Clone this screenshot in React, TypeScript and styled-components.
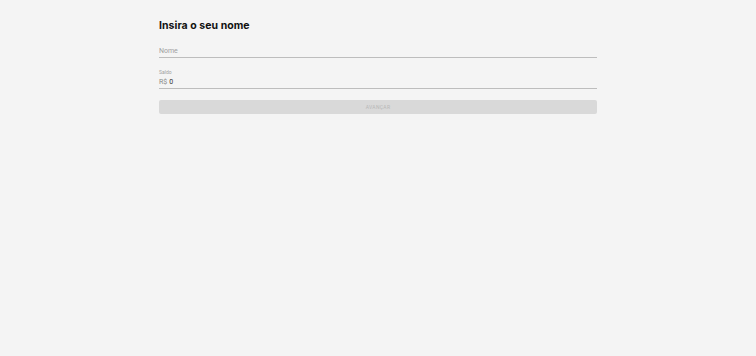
import React from "react";
import styled, { createGlobalStyle } from "styled-components";

const Global = createGlobalStyle`
  html, body { margin: 0; padding: 0; background: #f4f4f4; }
  body { font-family: "Roboto", "Liberation Sans", sans-serif; }
  #root { min-height: 356px; }
`;

const Page = styled.main`
  display: flex;
  justify-content: center;
  padding-top: 19px;
`;

const Form = styled.form`
  width: 438px;
  display: flex;
  flex-direction: column;
`;

const Title = styled.h1`
  margin: 0 0 14px;
  font-family: "Inter", "Liberation Sans", sans-serif;
  font-weight: 700;
  font-size: 10.5px;
  line-height: 13px;
  color: #111;
  letter-spacing: 0.05px;
`;

const Field = styled.div<{ $mb: number }>`
  display: flex;
  flex-direction: column;
  border-bottom: 1px solid #bdbdbd;
  margin-bottom: ${(p) => p.$mb}px;
`;

const Label = styled.label`
  font-size: 5px;
  color: #a0a0a0;
  line-height: 5px;
  margin-bottom: 2px;
`;

const Row = styled.div`
  display: flex;
  align-items: center;
  height: 10px;
  font-size: 7px;
  padding-bottom: 1px;
`;

const Prefix = styled.span`
  color: #8a8a8a;
  margin-right: 2px;
`;

const Input = styled.input`
  flex: 1;
  min-width: 0;
  border: none;
  background: transparent;
  outline: none;
  padding: 0;
  font-family: inherit;
  font-size: 7px;
  color: #333;
  &::placeholder { color: #a0a0a0; }
`;

const Button = styled.button`
  height: 14px;
  border: none;
  border-radius: 2px;
  background: #d9d9d9;
  color: #b8b8b8;
  font-family: "Roboto", "Liberation Sans", sans-serif;
  font-size: 5px;
  letter-spacing: 0.3px;
  text-transform: uppercase;
  padding: 0;
  cursor: default;
`;

export default function App() {
  return (
    <>
      <Global />
      <Page>
        <Form onSubmit={(e) => e.preventDefault()}>
          <Title>Insira o seu nome</Title>
          <Field $mb={12}>
            <Row>
              <Input placeholder="Nome" />
            </Row>
          </Field>
          <Field $mb={11}>
            <Label>Saldo</Label>
            <Row>
              <Prefix>R$</Prefix>
              <Input defaultValue="0" />
            </Row>
          </Field>
          <Button disabled>Avançar</Button>
        </Form>
      </Page>
    </>
  );
}
